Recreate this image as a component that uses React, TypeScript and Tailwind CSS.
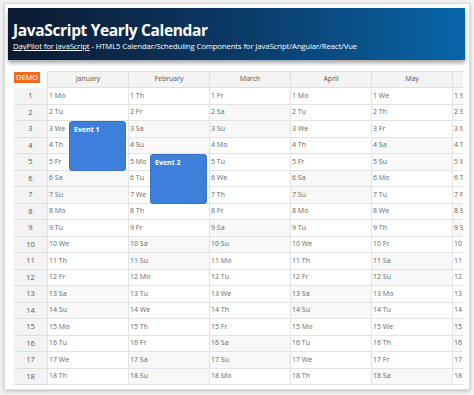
import React from 'react';

const months = ['January', 'February', 'March', 'April', 'May', 'June'];
const dayNames = ['Su', 'Mo', 'Tu', 'We', 'Th', 'Fr', 'Sa'];
const YEAR = 2024;
const ROWS = 18;

const events = [
  { id: 1, text: 'Event 1', month: 0, start: 3, end: 5 },
  { id: 2, text: 'Event 2', month: 1, start: 5, end: 7 },
];

const COL0 = 33;
const COLW = 81;
const HEAD = 17;
const ROWH = 16.5;

const App = () => {
  const rows = Array.from({ length: ROWS }, (_, i) => i + 1);

  return (
    <div className="w-[474px] h-[395px] bg-[#f4f4f4] pt-[3px] pl-[4px] overflow-hidden" style={{ fontFamily: '"Open Sans", "Noto Sans", sans-serif' }}>
      <div className="w-[466px] h-[387px] bg-white border border-[#dcdcdc] shadow-[0_1px_4px_rgba(0,0,0,0.25)] p-[4px] pl-[3px]">
        {/* Header */}
        <div className="h-[52px] bg-gradient-to-r from-[#0b1a30] via-[#0a3a66] to-[#0766aa] shadow-[0_3px_4px_rgba(0,0,0,0.35)] px-[5px] pt-[12px]">
          <h1 className="text-white font-bold text-[15.5px] leading-[21px] tracking-[-0.35px]">JavaScript Yearly Calendar</h1>
          <div className="text-white text-[7.7px] leading-[10px] tracking-[-0.1px] whitespace-nowrap">
            <span className="underline">DayPilot for JavaScript</span> - HTML5 Calendar/Scheduling Components for JavaScript/Angular/React/Vue
          </div>
        </div>

        {/* Calendar */}
        <div className="mt-[11px] ml-[6px] w-[449px] h-[314px] overflow-hidden">
          <div className="relative w-[519px]">
            <div className="flex h-[17px]">
              <div className="w-[33px] shrink-0 bg-white relative">
                <span className="absolute left-0 top-[1px] bg-[#f26a21] text-white text-[7.5px] leading-[11px] px-[2px]">DEMO</span>
              </div>
              {months.map((m) => (
                <div key={m} className="w-[81px] shrink-0 bg-[#f3f3f3] border-t border-l border-b border-[#dedede] flex items-center justify-center text-[7px] text-[#555]">
                  {m}
                </div>
              ))}
            </div>
            {rows.map((d) => (
              <div key={d} className="flex h-[16.5px]">
                <div className="w-[33px] shrink-0 bg-[#f3f3f3] border-b border-[#dedede] flex items-center justify-center text-[7.5px] text-[#555]">
                  {d}
                </div>
                {months.map((m, mi) => {
                  const dow = new Date(YEAR, mi, d).getDay();
                  const weekend = dow === 0 || dow === 6;
                  return (
                    <div
                      key={m}
                      className={`w-[81px] shrink-0 border-l border-b border-[#e3e3e3] flex items-center pl-[1px] text-[7px] text-[#666] ${weekend ? 'bg-[#f8f8f8]' : 'bg-white'}`}
                    >
                      {d} {dayNames[dow]}
                    </div>
                  );
                })}
              </div>
            ))}

            {events.map((ev) => (
              <div
                key={ev.id}
                className="absolute bg-[#3d7fdb] border border-[#3573cc] rounded-[3px] text-white font-bold text-[7px] leading-[9px] px-[4px] pt-[3px]"
                style={{
                  left: COL0 + ev.month * COLW + 22,
                  top: HEAD + (ev.start - 1) * ROWH,
                  width: 57,
                  height: (ev.end - ev.start + 1) * ROWH,
                }}
              >
                {ev.text}
              </div>
            ))}
          </div>
        </div>
      </div>
    </div>
  );
};

export default App;
